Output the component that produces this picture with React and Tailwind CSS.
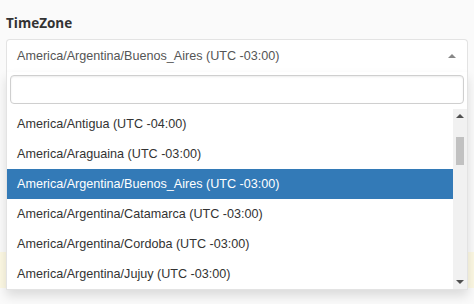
import React from "react";

const zones = [
  "America/Antigua (UTC -04:00)",
  "America/Araguaina (UTC -03:00)",
  "America/Argentina/Buenos_Aires (UTC -03:00)",
  "America/Argentina/Catamarca (UTC -03:00)",
  "America/Argentina/Cordoba (UTC -03:00)",
  "America/Argentina/Jujuy (UTC -03:00)",
];

function App() {
  const selected = "America/Argentina/Buenos_Aires (UTC -03:00)";

  return (
    <div className="h-[304px] w-[474px] overflow-hidden bg-[#fafafa] font-['Liberation_Sans',Arial,sans-serif]">
      <div className="px-[6px] pt-[14px]">
        <label className="block h-[25px] font-['Open_Sans',sans-serif] text-[13.5px] font-bold leading-[18px] text-[#333]">
          TimeZone
        </label>

        <div className="relative">
          {/* selection box */}
          <div className="flex h-[33px] items-center justify-between rounded-t-[4px] border border-b-0 border-[#e3e3e3] bg-white pl-[10px] pr-[11px]">
            <span className="text-[12.6px] text-[#555]">{selected}</span>
            <span className="h-0 w-0 border-x-[4px] border-b-[4px] border-x-transparent border-b-[#888]" />
          </div>

          {/* open dropdown */}
          <div className="absolute left-0 right-0 top-full z-10 border border-t-0 border-[#e3e3e3] bg-white shadow-[0_6px_10px_rgba(0,0,0,0.12)]">
            <div className="px-[3px] pb-[5px] pt-[3px]">
              <input
                type="text"
                className="block h-[29px] w-full rounded-[4px] border border-[#cfcfcf] px-2 text-[12.6px] shadow-[inset_0_1px_2px_rgba(0,0,0,0.08)] outline-none"
              />
            </div>

            <div className="flex h-[180px]">
              <ul className="flex-1">
                {zones.map((z) => (
                  <li
                    key={z}
                    className={
                      z === selected
                        ? "flex h-[30px] items-center bg-[#337ab7] pl-[10px] text-[12.6px] text-white"
                        : "flex h-[30px] items-center pl-[10px] text-[12.6px] text-[#333]"
                    }
                  >
                    {z}
                  </li>
                ))}
              </ul>

              {/* scrollbar */}
              <div className="flex w-[14px] flex-col items-center bg-[#f1f1f1]">
                <div className="flex h-[14px] items-center justify-center">
                  <span className="h-0 w-0 border-x-[4px] border-b-[4px] border-x-transparent border-b-[#505050]" />
                </div>
                <div className="mt-[14px] h-[28px] w-[8px] bg-[#c1c1c1]" />
                <div className="flex-1" />
                <div className="flex h-[14px] items-center justify-center">
                  <span className="h-0 w-0 border-x-[4px] border-t-[4px] border-x-transparent border-t-[#505050]" />
                </div>
              </div>
            </div>
          </div>
        </div>
      </div>

      {/* content underneath the dropdown */}
      <div className="mt-[180px] h-[36px] bg-[#fcf8e3]" />
    </div>
  );
}

export default App;
